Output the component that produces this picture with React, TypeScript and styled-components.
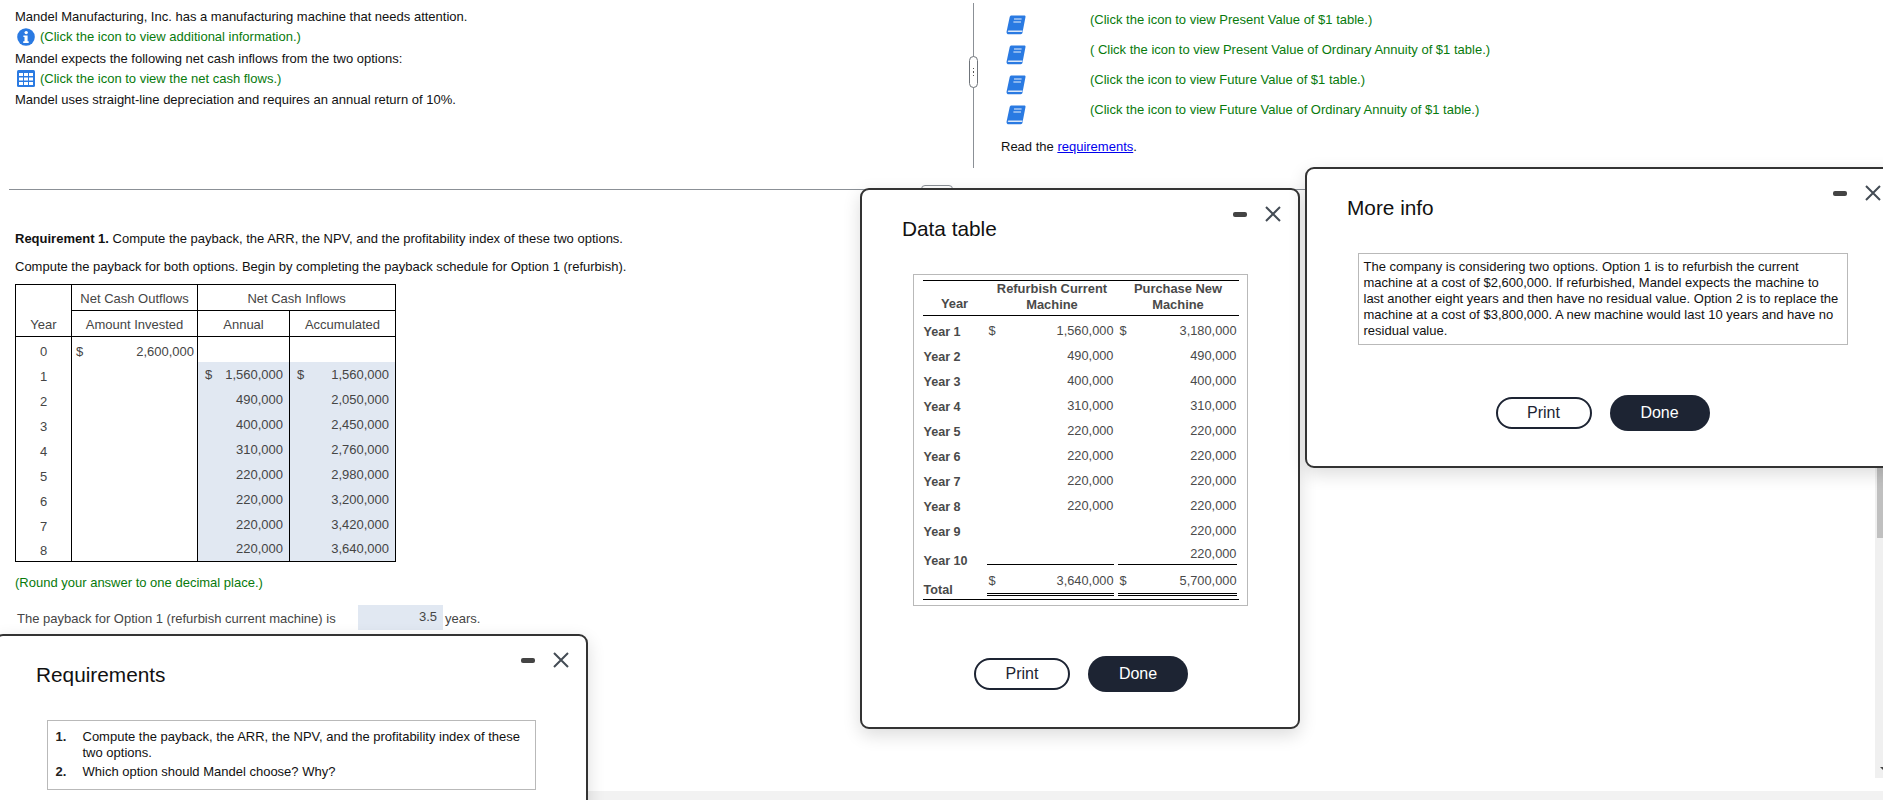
import styled, { createGlobalStyle } from "styled-components";

const GlobalStyle = createGlobalStyle`
  html, body {
    margin: 0;
    padding: 0;
    background: #fff;
    overflow: hidden;
  }
  body {
    font-family: "Liberation Sans", Arial, sans-serif;
    font-size: 13px;
    line-height: 16px;
    color: #111;
  }
`;

const Page = styled.div`
  position: relative;
  display: flex;
  flex-direction: column;
  width: 1883px;
  height: 800px;
  overflow: hidden;
`;

const TopSplit = styled.div`
  display: grid;
  grid-template-columns: 973px 1px 1fr;
  height: 168px;
`;

const Intro = styled.div`
  display: flex;
  flex-direction: column;
  padding: 9px 0 0 15px;
`;

const PlainLine = styled.div`
  margin-top: 5.5px;
  &:first-child {
    margin-top: 0;
  }
`;

const HintLine = styled.div`
  display: flex;
  align-items: center;
  gap: 5px;
  height: 16px;
  margin-top: 4px;
  padding-left: 2px;
  color: #087a0c;
`;

const Divider = styled.div`
  position: relative;
  margin-top: 3px;
  background: #8b9096;
`;

const DividerHandle = styled.div`
  position: absolute;
  top: 53px;
  left: -4px;
  box-sizing: border-box;
  display: flex;
  flex-direction: column;
  align-items: center;
  justify-content: center;
  gap: 2px;
  width: 9px;
  height: 32px;
  background: #fff;
  border: 1px solid #6f747a;
  border-radius: 5px;
`;

const HandleDot = styled.span`
  width: 1.5px;
  height: 1.5px;
  background: #555;
`;

const References = styled.div`
  padding: 11px 0 0 27px;
`;

const ReferenceRow = styled.div`
  display: grid;
  grid-template-columns: 84px 1fr;
  height: 30px;
  padding-left: 5px;
  color: #087a0c;
  svg {
    margin-top: 4px;
  }
  span {
    padding-top: 1px;
  }
`;

const ReadLine = styled.div`
  margin-top: 8px;
  a {
    color: #0000ee;
    text-decoration: underline;
  }
`;

const SectionRule = styled.div`
  position: relative;
  height: 1px;
  margin: 21px 0 0 9px;
  background: #8b9096;
`;

const RuleHandle = styled.div`
  position: absolute;
  top: -4px;
  left: 912px;
  box-sizing: border-box;
  width: 32px;
  height: 8px;
  background: #fff;
  border: 1px solid #8b9096;
  border-radius: 5px;
`;

const Question = styled.section`
  padding-left: 15px;
`;

const RequirementLine = styled.p`
  margin: 41px 0 0;
`;

const ScheduleLine = styled.p`
  margin: 12px 0 9px;
`;

const Schedule = styled.table`
  border-collapse: collapse;
  table-layout: fixed;
  width: 380px;
  color: #454545;
`;

const ScheduleHead = styled.th<{ $bottom?: boolean }>`
  box-sizing: border-box;
  height: 26px;
  padding: ${(p) => (p.$bottom ? "0 0 3px" : "3px 0 0")};
  font-weight: normal;
  text-align: center;
  border: 1px solid #000;
  vertical-align: ${(p) => (p.$bottom ? "bottom" : "middle")};
`;

const YearCell = styled.td`
  height: 25px;
  padding: 5px 0 0;
  text-align: center;
  border-left: 1px solid #000;
  border-right: 1px solid #000;
  box-sizing: border-box;
`;

const AmountCell = styled.td<{ $filled?: boolean; $padLeft: number; $padRight: number }>`
  height: 25px;
  padding: ${(p) => (p.$filled ? "1px" : "5px")} ${(p) => p.$padRight}px 0 ${(p) => p.$padLeft}px;
  box-sizing: border-box;
  background: ${(p) => (p.$filled ? "#e1e8f2" : "transparent")};
  border-left: 1px solid #000;
  border-right: 1px solid #000;
`;

const MoneyRow = styled.div`
  display: flex;
  justify-content: space-between;
`;

const ScheduleBody = styled.tbody`
  tr:last-child td {
    border-bottom: 1px solid #000;
  }
`;

const RoundNote = styled.p`
  margin: 13px 0 14px;
  color: #087a0c;
`;

const PaybackRow = styled.div`
  display: flex;
  align-items: center;
  height: 25px;
  padding-left: 2px;
  color: #454545;
`;

const PaybackLabel = styled.span`
  width: 341px;
  padding-top: 3px;
`;

const PaybackInput = styled.span`
  box-sizing: border-box;
  width: 85px;
  height: 25px;
  padding: 4px 6px 0 0;
  text-align: right;
  background: #e1e8f2;
`;

const PaybackUnit = styled.span`
  margin-left: 2px;
  padding-top: 3px;
`;

const FooterStripe = styled.div`
  height: 9px;
  margin-top: auto;
  background: #f2f2f2;
`;

const ScrollTrack = styled.div`
  position: absolute;
  top: 180px;
  right: 0;
  width: 8px;
  height: 598px;
  background: #f0f0f0;
`;

const ScrollThumb = styled.div`
  position: absolute;
  top: 0;
  right: 0;
  width: 6px;
  height: 358px;
  background: #c0c0c0;
`;

const ScrollArrow = styled.div`
  position: absolute;
  right: 0;
  bottom: 8px;
  width: 0;
  height: 0;
  border-top: 3px solid #444;
  border-left: 3px solid transparent;
`;

const Window = styled.div`
  position: absolute;
  box-sizing: border-box;
  background: #fff;
  border: 2px solid #333;
  border-radius: 9px;
  box-shadow: 0 6px 18px rgba(0, 0, 0, 0.14);
`;

const DataWindow = styled(Window)`
  top: 188px;
  left: 860px;
  z-index: 2;
  width: 440px;
`;

const RequirementsWindow = styled(Window)`
  top: 634px;
  left: -6px;
  z-index: 1;
  width: 594px;
  height: 240px;
`;

const WindowTitle = styled.h2`
  margin: 0;
  padding: 27px 0 0 40px;
  font-size: 20.8px;
  font-weight: normal;
  line-height: 24px;
  color: #111;
`;

const WindowControls = styled.div`
  position: absolute;
  top: 16px;
  right: 17px;
  display: flex;
  align-items: center;
  gap: 18px;
`;

const Minimize = styled.span`
  width: 14px;
  height: 5px;
  margin-top: 1px;
  background: #444;
  border-radius: 2px;
`;

const ContentBox = styled.div<{ $width: number }>`
  box-sizing: border-box;
  width: ${(p) => p.$width}px;
  margin: 33px auto 0;
  border: 1px solid #b9b9b9;
`;

const TableBox = styled(ContentBox)`
  padding: 5px 8px 5px 9px;
`;

const NoteBox = styled(ContentBox)`
  height: 92px;
  padding: 5px 5px 0;
`;

const ListBox = styled(ContentBox)`
  height: 70px;
  padding: 8px 8px 0;
`;

const RequirementItem = styled.div`
  display: grid;
  grid-template-columns: 27px 1fr;
  margin-bottom: 3px;
  padding-right: 4px;
  b {
    color: #222;
  }
`;

const ButtonRow = styled.div`
  display: flex;
  align-items: center;
  justify-content: center;
  gap: 18px;
  margin: 50px 0 35px;
  padding-left: 2px;
`;

const InfoWindow = styled(Window)`
  top: 167px;
  left: 1305px;
  z-index: 3;
  width: 595px;
  ${ButtonRow} {
    padding-left: 0;
  }
`;

const PrintButton = styled.button`
  box-sizing: border-box;
  width: 96px;
  height: 32px;
  padding: 0;
  font-family: inherit;
  font-size: 16px;
  color: #1d2433;
  background: #fff;
  border: 2px solid #1d2433;
  border-radius: 16px;
`;

const DoneButton = styled.button`
  width: 100px;
  height: 36px;
  padding: 0;
  font-family: inherit;
  font-size: 16px;
  color: #fff;
  background: #1d2433;
  border: 0;
  border-radius: 18px;
`;

const DataGrid = styled.table`
  border-collapse: collapse;
  table-layout: fixed;
  width: 316px;
  color: #4a4a4a;
  font-size: 12.8px;
`;

const DataHead = styled.th`
  padding: 0 0 2px;
  font-weight: bold;
  font-size: 12.9px;
  color: #4a4a4a;
  text-align: center;
  vertical-align: bottom;
  border-top: 1px solid #000;
  border-bottom: 1px solid #000;
`;

const YearHead = styled(DataHead)`
  padding: 0 0 3px;
`;

const DataRow = styled.tr<{ $height: number }>`
  height: ${(p) => p.$height}px;
`;

const YearLabel = styled.td<{ $pad: number }>`
  padding: 0 0 ${(p) => p.$pad}px 1px;
  font-size: 12.6px;
  font-weight: bold;
  vertical-align: bottom;
`;

const ValueCell = styled.td<{ $pad: number }>`
  padding: 0 0 ${(p) => p.$pad}px;
  vertical-align: bottom;
`;

const ValueBox = styled.div<{ $right: number; $rule?: "single" | "double" }>`
  display: flex;
  justify-content: space-between;
  margin-right: ${(p) => p.$right}px;
  margin-bottom: ${(p) => (p.$rule === "double" ? "2px" : "0")};
  padding: 0 0 ${(p) => (p.$rule === "double" ? "4px" : p.$rule ? "2px" : "0")} 2px;
  border-bottom: ${(p) => (p.$rule ? "1px solid #000" : "0")};
  box-shadow: ${(p) => (p.$rule === "double" ? "0 1px 0 #fff, 0 2px 0 #000" : "none")};
`;

const TotalRow = styled(DataRow)`
  td {
    border-bottom: 1px solid #000;
  }
`;

const BookIcon = () => (
  <svg width="20" height="20" viewBox="0 0 20 20">
    <path
      fill="#2a7ae2"
      d="M5.5.5h12.7c1 0 1.5.7 1.3 1.6l-3 15.5c-.2 1-.8 1.7-1.8 1.7H2.6C1.2 19.3.3 18 .6 16.6L3.7 2c.2-.9.9-1.5 1.8-1.5z"
    />
    <path fill="#dbe8fa" d="M2.6 15.6h14l-.3 1.5H2.6c-1.1 0-1.1-1.5 0-1.5z" />
    <path stroke="#e6effc" strokeWidth="1" d="M8 4h7.6M7.4 7h7.6" />
  </svg>
);

const InfoIcon = () => (
  <svg width="18" height="18" viewBox="0 0 18 18">
    <circle cx="9" cy="9" r="8.8" fill="#2a7ae2" />
    <circle cx="9.2" cy="4.6" r="1.7" fill="#fff" />
    <path fill="#fff" d="M6.4 7.4h4.2v5.9h1.1V15H6.2v-1.7h1.3V9H6.4z" />
  </svg>
);

const TableIcon = () => (
  <svg width="18" height="17" viewBox="0 0 18 17">
    <rect width="18" height="17" rx="1.5" fill="#2a7ae2" />
    {[3, 7.5, 12].map((y) =>
      [2, 7, 12].map((x) => <rect key={`${x}-${y}`} x={x} y={y} width="4" height="3" fill="#fff" />)
    )}
  </svg>
);

const CloseIcon = () => (
  <svg width="16" height="16" viewBox="0 0 16 16">
    <path stroke="#444c55" strokeWidth="2" d="M1 1l14 14M15 1L1 15" />
  </svg>
);

const Controls = () => (
  <WindowControls>
    <Minimize />
    <CloseIcon />
  </WindowControls>
);

const Buttons = () => (
  <ButtonRow>
    <PrintButton>Print</PrintButton>
    <DoneButton>Done</DoneButton>
  </ButtonRow>
);

const references = [
  "(Click the icon to view Present Value of $1 table.)",
  "( Click the icon to view Present Value of Ordinary Annuity of $1 table.)",
  "(Click the icon to view Future Value of $1 table.)",
  "(Click the icon to view Future Value of Ordinary Annuity of $1 table.)",
];

const scheduleRows = [
  ["1", "1,560,000", "1,560,000"],
  ["2", "490,000", "2,050,000"],
  ["3", "400,000", "2,450,000"],
  ["4", "310,000", "2,760,000"],
  ["5", "220,000", "2,980,000"],
  ["6", "220,000", "3,200,000"],
  ["7", "220,000", "3,420,000"],
  ["8", "220,000", "3,640,000"],
];

const dataRows = [
  ["Year 1", "1,560,000", "3,180,000"],
  ["Year 2", "490,000", "490,000"],
  ["Year 3", "400,000", "400,000"],
  ["Year 4", "310,000", "310,000"],
  ["Year 5", "220,000", "220,000"],
  ["Year 6", "220,000", "220,000"],
  ["Year 7", "220,000", "220,000"],
  ["Year 8", "220,000", "220,000"],
  ["Year 9", "", "220,000"],
];

export default function App() {
  return (
    <Page>
      <GlobalStyle />
      <TopSplit>
        <Intro>
          <PlainLine>Mandel Manufacturing, Inc. has a manufacturing machine that needs attention.</PlainLine>
          <HintLine>
            <InfoIcon />
            (Click the icon to view additional information.)
          </HintLine>
          <PlainLine>Mandel expects the following net cash inflows from the two options:</PlainLine>
          <HintLine>
            <TableIcon />
            (Click the icon to view the net cash flows.)
          </HintLine>
          <PlainLine>Mandel uses straight-line depreciation and requires an annual return of 10%.</PlainLine>
        </Intro>
        <Divider>
          <DividerHandle>
            <HandleDot />
            <HandleDot />
            <HandleDot />
          </DividerHandle>
        </Divider>
        <References>
          {references.map((text) => (
            <ReferenceRow key={text}>
              <BookIcon />
              <span>{text}</span>
            </ReferenceRow>
          ))}
          <ReadLine>
            Read the <a href="#requirements">requirements</a>.
          </ReadLine>
        </References>
      </TopSplit>
      <SectionRule>
        <RuleHandle />
      </SectionRule>
      <Question>
        <RequirementLine>
          <b>Requirement 1.</b> Compute the payback, the ARR, the NPV, and the profitability index of these two options.
        </RequirementLine>
        <ScheduleLine>
          Compute the payback for both options. Begin by completing the payback schedule for Option 1 (refurbish).
        </ScheduleLine>
        <Schedule>
          <colgroup>
            <col width="56" />
            <col width="126" />
            <col width="92" />
            <col width="106" />
          </colgroup>
          <thead>
            <tr>
              <ScheduleHead rowSpan={2} $bottom>
                Year
              </ScheduleHead>
              <ScheduleHead>Net Cash Outflows</ScheduleHead>
              <ScheduleHead colSpan={2}>Net Cash Inflows</ScheduleHead>
            </tr>
            <tr>
              <ScheduleHead>Amount Invested</ScheduleHead>
              <ScheduleHead>Annual</ScheduleHead>
              <ScheduleHead>Accumulated</ScheduleHead>
            </tr>
          </thead>
          <ScheduleBody>
            <tr>
              <YearCell>0</YearCell>
              <AmountCell $padLeft={4} $padRight={3}>
                <MoneyRow>
                  <span>$</span>
                  <span>2,600,000</span>
                </MoneyRow>
              </AmountCell>
              <AmountCell $padLeft={7} $padRight={6} />
              <AmountCell $padLeft={7} $padRight={6} />
            </tr>
            {scheduleRows.map(([year, annual, accumulated], index) => (
              <tr key={year}>
                <YearCell>{year}</YearCell>
                <AmountCell $padLeft={4} $padRight={3} />
                <AmountCell $filled $padLeft={7} $padRight={6}>
                  <MoneyRow>
                    <span>{index === 0 ? "$" : ""}</span>
                    <span>{annual}</span>
                  </MoneyRow>
                </AmountCell>
                <AmountCell $filled $padLeft={7} $padRight={6}>
                  <MoneyRow>
                    <span>{index === 0 ? "$" : ""}</span>
                    <span>{accumulated}</span>
                  </MoneyRow>
                </AmountCell>
              </tr>
            ))}
          </ScheduleBody>
        </Schedule>
        <RoundNote>(Round your answer to one decimal place.)</RoundNote>
        <PaybackRow>
          <PaybackLabel>The payback for Option 1 (refurbish current machine) is</PaybackLabel>
          <PaybackInput>3.5</PaybackInput>
          <PaybackUnit>years.</PaybackUnit>
        </PaybackRow>
      </Question>
      <FooterStripe />
      <ScrollTrack>
        <ScrollThumb />
        <ScrollArrow />
      </ScrollTrack>

      <RequirementsWindow>
        <Controls />
        <WindowTitle>Requirements</WindowTitle>
        <ListBox $width={489}>
          <RequirementItem>
            <b>1.</b>
            <span>Compute the payback, the ARR, the NPV, and the profitability index of these two options.</span>
          </RequirementItem>
          <RequirementItem>
            <b>2.</b>
            <span>Which option should Mandel choose? Why?</span>
          </RequirementItem>
        </ListBox>
      </RequirementsWindow>

      <DataWindow>
        <Controls />
        <WindowTitle>Data table</WindowTitle>
        <TableBox $width={335}>
          <DataGrid>
            <colgroup>
              <col width="64" />
              <col width="131" />
              <col width="121" />
            </colgroup>
            <thead>
              <tr>
                <YearHead>Year</YearHead>
                <DataHead>
                  Refurbish Current
                  <br />
                  Machine
                </DataHead>
                <DataHead>
                  Purchase New
                  <br />
                  Machine
                </DataHead>
              </tr>
            </thead>
            <tbody>
              {dataRows.map(([year, refurbish, purchase], index) => (
                <DataRow key={year} $height={index === 0 ? 28 : 25}>
                  <YearLabel $pad={4}>{year}</YearLabel>
                  <ValueCell $pad={5}>
                    <ValueBox $right={4}>
                      <span>{index === 0 ? "$" : ""}</span>
                      <span>{refurbish}</span>
                    </ValueBox>
                  </ValueCell>
                  <ValueCell $pad={5}>
                    <ValueBox $right={2}>
                      <span>{index === 0 ? "$" : ""}</span>
                      <span>{purchase}</span>
                    </ValueBox>
                  </ValueCell>
                </DataRow>
              ))}
              <DataRow $height={25}>
                <YearLabel $pad={0}>Year 10</YearLabel>
                <ValueCell $pad={4}>
                  <ValueBox $right={4} $rule="single">
                    <span />
                    <span />
                  </ValueBox>
                </ValueCell>
                <ValueCell $pad={4}>
                  <ValueBox $right={2} $rule="single">
                    <span />
                    <span>220,000</span>
                  </ValueBox>
                </ValueCell>
              </DataRow>
              <TotalRow $height={31}>
                <YearLabel $pad={1}>Total</YearLabel>
                <ValueCell $pad={3}>
                  <ValueBox $right={4} $rule="double">
                    <span>$</span>
                    <span>3,640,000</span>
                  </ValueBox>
                </ValueCell>
                <ValueCell $pad={3}>
                  <ValueBox $right={2} $rule="double">
                    <span>$</span>
                    <span>5,700,000</span>
                  </ValueBox>
                </ValueCell>
              </TotalRow>
            </tbody>
          </DataGrid>
        </TableBox>
        <Buttons />
      </DataWindow>

      <InfoWindow>
        <Controls />
        <WindowTitle>More info</WindowTitle>
        <NoteBox $width={490}>
          The company is considering two options. Option 1 is to refurbish the current machine at a cost of $2,600,000. If
          refurbished, Mandel expects the machine to last another eight years and then have no residual value. Option 2 is
          to replace the machine at a cost of $3,800,000. A new machine would last 10 years and have no residual value.
        </NoteBox>
        <Buttons />
      </InfoWindow>
    </Page>
  );
}
